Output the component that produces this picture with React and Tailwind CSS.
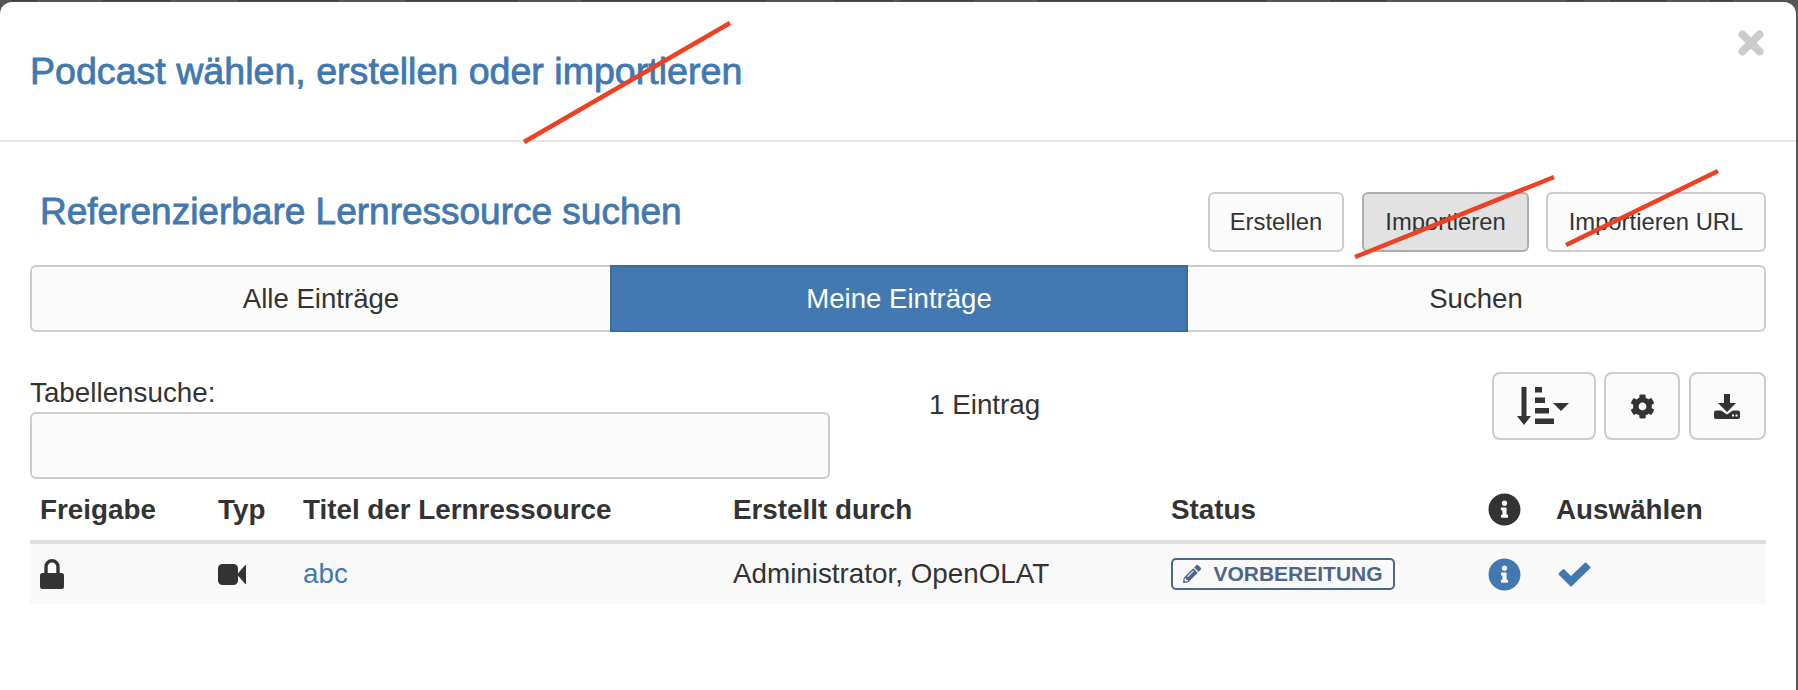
import React from 'react';
import { FaCog, FaInfoCircle, FaPencilAlt } from 'react-icons/fa';

// bits of the page behind the dialog that still show above its top edge
const peekMarks = [
    [11, 26], [103, 68], [238, 101], [405, 113], [581, 186], [833, 60],
    [900, 75], [1037, 230], [1330, 57], [1567, 17], [1610, 57], [1710, 23],
];

const CloseIcon = () => (
    <svg width="26" height="26" viewBox="0 0 26 26" className="text-[#cccccc]">
        <path d="M4.500 4.500l17 17M21.500 4.500l-17 17" fill="none" stroke="currentColor" strokeWidth="8" strokeLinecap="round" />
    </svg>
);

const LockIcon = () => (
    <svg width="24" height="30" viewBox="0 0 24 30" className="text-[#333333]">
        <path d="M6 15V7.700a6 6 0 0 1 12 0V15" fill="none" stroke="currentColor" strokeWidth="3.400" />
        <rect x="0" y="14" width="24" height="16" rx="2.500" fill="currentColor" />
    </svg>
);

const VideoIcon = () => (
    <svg width="28" height="21" viewBox="0 0 28 21" className="text-[#333333]">
        <rect x="0" y="0" width="20" height="21" rx="4.500" fill="currentColor" />
        <path d="M19 10.500L27 1.200q1-.7 1 .6v17.400q0 1.300-1 .6z" fill="currentColor" />
    </svg>
);

const CheckIcon = () => (
    <svg width="33" height="25" viewBox="0 0 33 25" className="text-[#4278b0]">
        <path d="M13 23.500L1.500 12l4-4 7.500 7.500L27.500 1.500l4 4z" fill="currentColor" stroke="currentColor" strokeWidth="2" strokeLinejoin="round" />
    </svg>
);

const SortIcon = () => (
    <svg width="52" height="38" viewBox="0 0 52 38" className="mr-[3px] text-[#333333]">
        <path d="M4.500 0h5v29h4.500L7 38 0 29h4.500z" fill="currentColor" />
        <rect x="18" y="0" width="7" height="5.500" fill="currentColor" />
        <rect x="18" y="10.500" width="10" height="5.500" fill="currentColor" />
        <rect x="18" y="21" width="14" height="5.500" fill="currentColor" />
        <rect x="18" y="31.500" width="19" height="5.500" fill="currentColor" />
        <path d="M36 16h16l-8 8z" fill="currentColor" />
    </svg>
);

const DownloadIcon = () => (
    <svg width="26" height="25" viewBox="0 0 26 25" className="mr-[1px] text-[#333333]">
        <path d="M10 0h6v9h6l-9 9-9-9h6z" fill="currentColor" />
        <path d="M0 18.500a2 2 0 0 1 2-2h5l6 4 6-4h5a2 2 0 0 1 2 2V23a2 2 0 0 1-2 2H2a2 2 0 0 1-2-2z" fill="currentColor" />
        <rect x="18" y="20.500" width="2" height="2" fill="#fbfbfb" />
        <rect x="21.500" y="20.500" width="2" height="2" fill="#fbfbfb" />
    </svg>
);

const App = () => {
    return (
        <div className="relative h-[690px] w-[1798px] overflow-hidden bg-[#555555] pt-[2px] pr-[2px] font-['Liberation_Sans',Arial,sans-serif] text-[#333333]">
            <div className="h-[700px] rounded-[12px] bg-white">
                <div className="flex h-[140px] items-start justify-between border-b-2 border-[#e5e5e5] pl-[30px]">
                    <h4 className="mt-[47px] text-[37.600px] leading-[44px] text-[#4278b0] [-webkit-text-stroke:0.8px_#4278b0]">Podcast wählen, erstellen oder importieren</h4>
                    <div className="mt-[28px] mr-[32px]"><CloseIcon /></div>
                </div>

                <div className="px-[30px]">
                    <div className="flex h-[123px] items-start justify-between">
                        <h3 className="mt-[48px] ml-[10px] text-[37px] leading-[44px] text-[#4278b0] [-webkit-text-stroke:0.8px_#4278b0]">Referenzierbare Lernressource suchen</h3>
                        <div className="mt-[50px] flex text-[23.800px]">
                            <button className="h-[60px] w-[136px] rounded-[6px] border-2 border-[#cccccc] bg-[#fbfbfb]">Erstellen</button>
                            <button className="ml-[18px] h-[60px] w-[167px] rounded-[6px] border-2 border-[#adadad] bg-[#e2e2e2]">Importieren</button>
                            <button className="ml-[17px] h-[60px] w-[220px] rounded-[6px] border-2 border-[#cccccc] bg-[#fbfbfb]">Importieren URL</button>
                        </div>
                    </div>

                    <div className="flex h-[67px] text-[27.600px]">
                        <button className="w-[580px] rounded-l-[6px] border-2 border-r-0 border-[#cccccc] bg-[#fbfbfb]">Alle Einträge</button>
                        <button className="w-[578px] border-2 border-[#3c6d9f] bg-[#4478b0] text-white">Meine Einträge</button>
                        <button className="flex-1 rounded-r-[6px] border-2 border-l-0 border-[#cccccc] bg-[#fbfbfb]">Suchen</button>
                    </div>

                    <div className="mt-[41px] flex h-[106px] items-start">
                        <div className="w-[800px]">
                            <label className="block text-[27.800px] leading-[39px]">Tabellensuche:</label>
                            <input className="block h-[67px] w-full rounded-[6px] border-2 border-[#cccccc] bg-[#fbfbfb]" />
                        </div>
                        <div className="mt-[16px] ml-[99px] text-[27.800px] leading-[32px]">1 Eintrag</div>
                        <div className="-mt-[1px] ml-auto flex">
                            <button className="flex h-[68px] w-[104px] items-center justify-center rounded-[8px] border-2 border-[#cccccc] bg-[#fbfbfb]"><SortIcon /></button>
                            <button className="ml-[8px] flex h-[68px] w-[76px] items-center justify-center rounded-[8px] border-2 border-[#cccccc] bg-[#fbfbfb]"><FaCog className="text-[25px]" /></button>
                            <button className="ml-[9px] flex h-[68px] w-[77px] items-center justify-center rounded-[8px] border-2 border-[#cccccc] bg-[#fbfbfb]"><DownloadIcon /></button>
                        </div>
                    </div>

                    <table className="w-full table-fixed border-collapse text-left text-[27.800px]">
                        <colgroup>
                            <col className="w-[178px]" />
                            <col className="w-[85px]" />
                            <col className="w-[430px]" />
                            <col className="w-[438px]" />
                            <col className="w-[317px]" />
                            <col className="w-[68px]" />
                            <col />
                        </colgroup>
                        <thead>
                            <tr className="h-[63px] border-b-[4px] border-[#dddddd]">
                                <th className="pl-[10px]">Freigabe</th>
                                <th className="pl-[10px]">Typ</th>
                                <th className="pl-[10px]">Titel der Lernressource</th>
                                <th className="pl-[10px]">Erstellt durch</th>
                                <th className="pl-[10px]">Status</th>
                                <th className="pl-[10px]"><FaInfoCircle className="text-[33px]" /></th>
                                <th className="pl-[10px]">Auswählen</th>
                            </tr>
                        </thead>
                        <tbody>
                            <tr className="h-[62px] bg-[#f9f9f9]">
                                <td className="pl-[10px]"><LockIcon /></td>
                                <td className="pl-[10px]"><VideoIcon /></td>
                                <td className="pl-[10px] text-[#4278b0]">abc</td>
                                <td className="pl-[10px]">Administrator, OpenOLAT</td>
                                <td className="pl-[10px]">
                                    <span className="inline-flex h-[32px] w-[224px] items-center justify-center gap-[12px] rounded-[5px] border-2 border-[#4a678a] text-[21px] font-bold text-[#4a678a]">
                                        <FaPencilAlt className="text-[18px]" />
                                        VORBEREITUNG
                                    </span>
                                </td>
                                <td className="pl-[10px]"><FaInfoCircle className="text-[33px] text-[#4278b0]" /></td>
                                <td className="pl-[12px]"><CheckIcon /></td>
                            </tr>
                        </tbody>
                    </table>
                </div>
            </div>

            {/* red strike-through marks drawn on top of the screenshot */}
            <svg className="pointer-events-none absolute inset-0" width="1798" height="690" viewBox="0 0 1798 690">
                {peekMarks.map(([x, w]) => (
                    <rect key={x} x={x} y="0" width={w} height="1.500" fill="#333333" opacity="0.55" />
                ))}
                <line x1="524" y1="142" x2="730" y2="23" stroke="#ee4023" strokeWidth="4.500" />
                <line x1="1355" y1="257" x2="1554" y2="177" stroke="#ee4023" strokeWidth="4.500" />
                <line x1="1566" y1="245" x2="1718" y2="171" stroke="#ee4023" strokeWidth="4.500" />
            </svg>
        </div>
    );
};

export default App;
